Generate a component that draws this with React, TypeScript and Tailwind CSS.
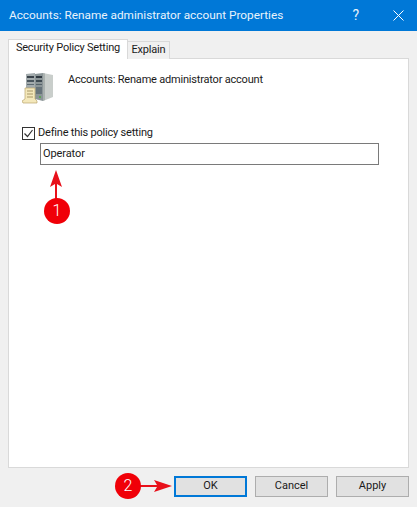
const font = { fontFamily: 'Roboto, sans-serif' };

function ServerIcon() {
  return (
    <svg width="32" height="33" viewBox="0 0 32 33" className="shrink-0">
      {/* right tower side */}
      <path d="M21 2 L31 4 L31 26 L21 30 Z" fill="#c9cecb" />
      <path d="M21 2 L23 2.4 L23 29 L21 30 Z" fill="#aab1af" />
      {/* right tower face */}
      <path d="M13 3 L21 2 L21 30 L13 28 Z" fill="#8b9597" />
      <rect x="14" y="5" width="6" height="2" fill="#2f3840" />
      <rect x="14" y="9" width="6" height="2" fill="#3e4a52" />
      <rect x="14" y="13" width="6" height="1" fill="#56636a" />
      <rect x="14" y="16" width="6" height="7" fill="#66737a" />
      <rect x="17" y="25" width="2" height="2" fill="#5fa35a" />
      {/* left tower */}
      <path d="M4 3 L13 2 L13 28 L4 26 Z" fill="#a3abad" />
      <rect x="5" y="5" width="7" height="2" fill="#39424a" />
      <rect x="5" y="9" width="7" height="2" fill="#4a565e" />
      <rect x="5" y="13" width="7" height="1" fill="#5e6b72" />
      {/* scroll */}
      <path d="M3 17 L13 17 L13 28 L15 30 L15 32 L1 32 L0 30 L3 28 Z" fill="#f4e8bb" stroke="#b9a56e" strokeWidth="0.7" />
      <path d="M5 20 H11 M5 23 H11 M5 26 H11" stroke="#a89768" strokeWidth="1" />
    </svg>
  );
}

function Button({ label, primary }: { label: string; primary?: boolean }) {
  return (
    <button
      className={
        primary
          ? "h-[21px] w-[73px] bg-[#e1e1e1] border-2 border-[#0078d7] text-[11px] text-[#1a1a1a]"
          : "h-[21px] w-[73px] bg-[#e1e1e1] border border-[#adadad] text-[11px] text-[#1a1a1a]"
      }
    >
      {label}
    </button>
  );
}

export default function App() {
  return (
    <div className="relative w-[417px] h-[507px] overflow-hidden bg-[#f0f0f0] flex flex-col" style={font}>
      {/* Title bar */}
      <div className="h-[31px] bg-[#0078d7] text-[#e8f3fc] flex items-center pl-[9px] shrink-0">
        <span className="text-[11.8px] flex-1 whitespace-nowrap">Accounts: Rename administrator account Properties</span>
        <span className="text-[14px] mr-[34px]">?</span>
        <svg width="11" height="11" viewBox="0 0 11 11" className="mr-[13px]">
          <path d="M0.5 0.5 L10.5 10.5 M10.5 0.5 L0.5 10.5" stroke="#fff" strokeWidth="1" />
        </svg>
      </div>

      {/* Tabs */}
      <div className="flex items-end pl-[8px] pt-[8px] h-[28px] shrink-0 relative z-10">
        <div className="h-[20px] w-[120px] bg-white border border-b-0 border-[#d9d9d9] text-[11px] tracking-[-0.2px] text-[#1a1a1a] flex items-center justify-center whitespace-nowrap pb-[2px]">
          Security Policy Setting
        </div>
        <div className="h-[18px] w-[42px] bg-[#f0f0f0] border border-l-0 border-b-0 border-[#d9d9d9] text-[11px] tracking-[-0.2px] text-[#1a1a1a] flex items-center justify-center whitespace-nowrap">
          Explain
        </div>
      </div>

      {/* Panel */}
      <div className="mx-[8px] -mt-px h-[410px] w-[401px] bg-white border border-[#d9d9d9] shrink-0 pl-[13px] pt-[12px]">
        <div className="flex items-start gap-[14px] h-[55px]">
          <ServerIcon />
          <span className="text-[11px] tracking-[-0.2px] text-[#1a1a1a] whitespace-nowrap mt-[1px]">Accounts: Rename administrator account</span>
        </div>
        <label className="flex items-center gap-[3px] h-[14px]">
          <span className="w-[13px] h-[13px] border border-[#333] flex items-center justify-center bg-white">
            <svg width="11" height="11" viewBox="0 0 11 11">
              <path d="M1.5 5.5 L4.5 8.5 L9.5 2" fill="none" stroke="#333" strokeWidth="1.2" />
            </svg>
          </span>
          <span className="text-[11px] tracking-[-0.2px] text-[#1a1a1a] whitespace-nowrap pt-[1px]">Define this policy setting</span>
        </label>
        <div className="ml-[18px] mt-[3px] w-[339px] h-[22px] border border-[#7a7a7a] flex items-center pl-[2px] text-[11px] tracking-[-0.1px] text-[#1a1a1a]">
          Operator
        </div>
      </div>

      {/* Buttons */}
      <div className="flex justify-end gap-[8px] pr-[8px] pt-[8px]">
        <Button label="OK" primary />
        <Button label="Cancel" />
        <Button label="Apply" />
      </div>

      {/* Annotation 1 */}
      <svg width="20" height="30" viewBox="0 0 20 30" className="absolute left-[46px] top-[169px]">
        <path d="M10 1 L16 18 L11 15 L11 30 L9 30 L9 15 L4 18 Z" fill="#e8101a" />
      </svg>
      <div className="absolute left-[44px] top-[198px] w-[26px] h-[26px] rounded-full bg-[#f00008] text-white text-[16px] font-light flex items-center justify-center">
        1
      </div>

      {/* Annotation 2 */}
      <svg width="34" height="16" viewBox="0 0 34 16" className="absolute left-[139px] top-[478px]">
        <path d="M33 8 L15 14 L18 9 L0 9 L0 7 L18 7 L15 2 Z" fill="#e8101a" />
      </svg>
      <div className="absolute left-[115px] top-[473px] w-[26px] h-[26px] rounded-full bg-[#f00008] text-white text-[16px] font-light flex items-center justify-center">
        2
      </div>
    </div>
  );
}
